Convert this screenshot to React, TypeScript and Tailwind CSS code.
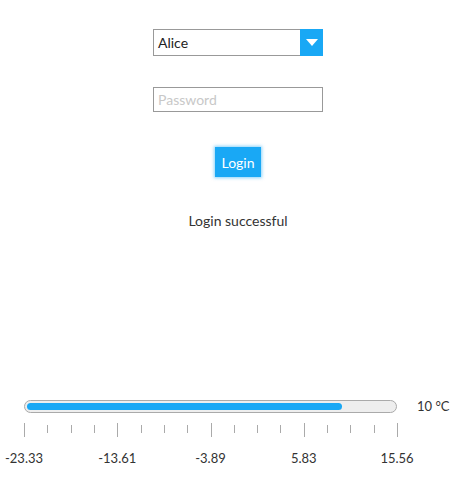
import { useState } from 'react'

const ticks = [-23.33, -13.61, -3.89, 5.83, 15.56]

export default function App() {
  const [user] = useState('Alice')
  const min = -23.33
  const max = 15.56
  const value = 10
  const pct = ((value - min) / (max - min)) * 100

  return (
    <div className="w-[474px] h-[482px] bg-white text-[#333] font-['Lato','Liberation_Sans',sans-serif] flex flex-col">
      <div className="flex flex-col items-center pt-[29px] pl-[2px]">
        <div className="flex w-[170px] h-[27px] border border-[#999]">
          <div className="flex-1 flex items-center pl-[4px] text-[14px] text-[#222]">{user}</div>
          <div className="w-[23px] -my-px -mr-px h-[27px] bg-[#19a8f5] flex items-center justify-center">
            <svg width="12" height="7" viewBox="0 0 12 7">
              <path d="M0 0 L12 0 L6 7 Z" fill="#fff" />
            </svg>
          </div>
        </div>
        <input
          type="password"
          placeholder="Password"
          className="mt-[31px] w-[170px] h-[25px] border border-[#999] px-[4px] text-[14px] placeholder:text-[#c8c8c8] outline-none"
        />
        <button className="mt-[35px] h-[30px] px-[6px] bg-[#19a8f5] text-white text-[14px] shadow-[0_0_3px_1px_rgba(25,168,245,0.5)]">
          Login
        </button>
        <div className="mt-[33px] text-[14px] text-[#333]">Login successful</div>
      </div>

      <div className="mt-auto mb-[11px] pl-[24px]">
        <div className="flex items-center h-[13px]">
          <div className="w-[373px] h-[13px] rounded-full border border-[#aaa] bg-[#eee] p-[2px]">
            <div className="h-full rounded-full bg-[#19a8f5]" style={{ width: `${pct}%` }} />
          </div>
          <span className="ml-[20px] text-[13px] leading-[13px] text-[#333]">10 °C</span>
        </div>
        <div className="relative w-[373px] h-[48px] mt-[10px]">
          {Array.from({ length: 17 }).map((_, i) => {
            const major = i % 4 === 0
            return (
              <div
                key={i}
                className={`absolute w-px bg-[#aaa] ${major ? 'top-0 h-[14px]' : 'top-[2px] h-[8px]'}`}
                style={{ left: `${(i / 16) * 100}%` }}
              />
            )
          })}
          {ticks.map((t, i) => (
            <span
              key={t}
              className="absolute top-[26px] -translate-x-1/2 text-[13px] text-[#333]"
              style={{ left: `${(i / 4) * 100}%` }}
            >
              {t}
            </span>
          ))}
        </div>
      </div>
    </div>
  )
}
